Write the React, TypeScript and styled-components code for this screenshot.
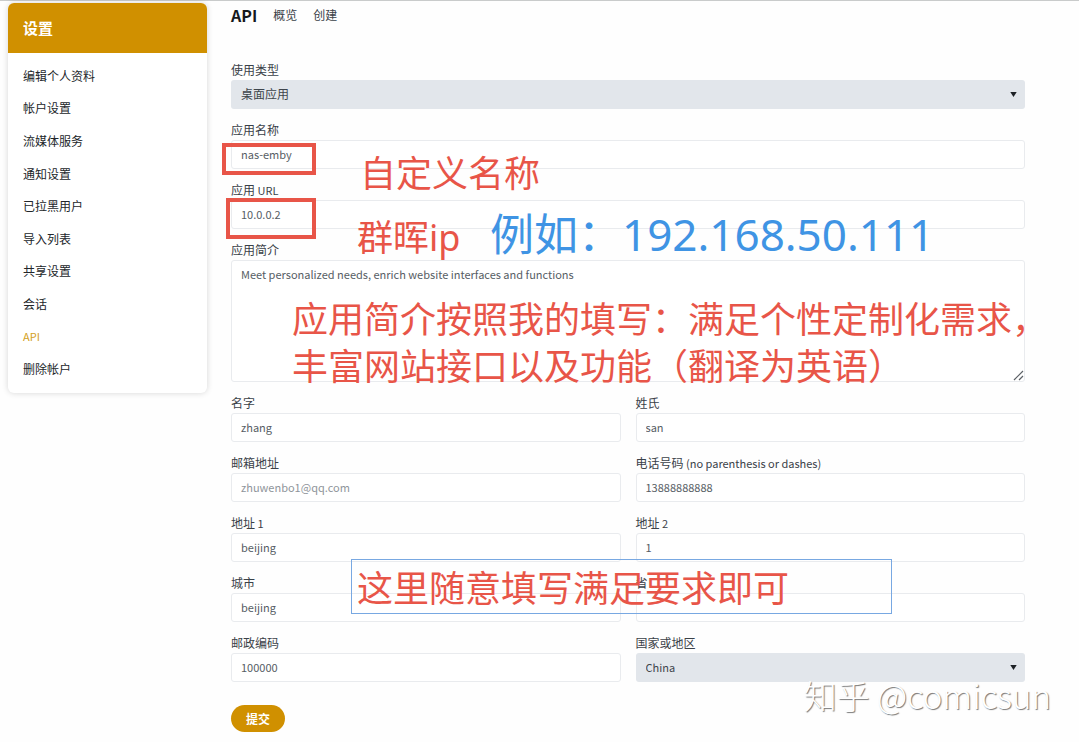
import React from "react";
import styled, { createGlobalStyle } from "styled-components";

const GlobalStyle = createGlobalStyle`
  *, *::before, *::after { box-sizing: border-box; }
  body {
    margin: 0;
    background: #fefefe;
    color: #3a4148;
    font-family: "Noto Sans CJK SC", sans-serif;
    font-size: 12px;
  }
`;

const Page = styled.div`
  position: relative;
  display: flex;
  align-items: flex-start;
  gap: 24px;
  padding: 2px 54px 9px 8px;
  border-top: 1px solid #c9cbcb;
`;

const Sidebar = styled.aside`
  flex: 0 0 199px;
  border-radius: 6px;
  background: #fff;
  box-shadow: 0 0 6px rgba(0, 0, 0, 0.16);
  overflow: hidden;
`;

const SidebarTitle = styled.h2`
  margin: 0;
  padding: 0 15px;
  background: #d09000;
  color: #fff;
  font-size: 15px;
  font-weight: 700;
  line-height: 50px;
`;

const Menu = styled.nav`
  display: grid;
  grid-auto-rows: 1fr;
  min-height: 340px;
  padding: 6px 15px 8px;
`;

const MenuLink = styled.a<{ $active?: boolean }>`
  display: flex;
  align-items: center;
  color: ${(p) => (p.$active ? "#d3a021" : "#22262a")};
  font-size: ${(p) => (p.$active ? 11 : 12)}px;
  text-decoration: none;
`;

const Main = styled.main`
  flex: 1;
  min-width: 0;
`;

const Header = styled.header`
  display: flex;
  align-items: center;
  gap: 16px;
  height: 24px;
  margin-bottom: 33px;
`;

const Title = styled.h1`
  margin: 0;
  color: #16191c;
  font-size: 16px;
  font-weight: 700;
  line-height: 24px;
`;

const HeaderLink = styled.a`
  color: #3a4148;
  text-decoration: none;
  line-height: 24px;
`;

const Form = styled.form`
  display: grid;
  grid-template-columns: 1fr 1fr;
  gap: 11px 15px;
`;

const FieldBox = styled.div<{ $wide?: boolean }>`
  display: flex;
  flex-direction: column;
  grid-column: ${(p) => (p.$wide ? "1 / -1" : "auto")};
`;

const Label = styled.label`
  line-height: 20px;
  white-space: pre;
`;

const LabelNote = styled.span`
  font-size: 11px;
`;

const Input = styled.input`
  width: 100%;
  height: 29px;
  padding: 0 9px 2px;
  border: 1px solid #e9ebee;
  border-radius: 3px;
  background: #fff;
  color: #565d64;
  font: 11px "Noto Sans CJK SC", sans-serif;

  &:disabled { color: #8f959b; }
`;

const TextAreaWrap = styled.div`
  position: relative;
  display: flex;

  svg {
    position: absolute;
    right: 1px;
    bottom: 1px;
    pointer-events: none;
  }
`;

const TextArea = styled.textarea`
  width: 100%;
  height: 122px;
  padding: 3px 9px;
  border: 1px solid #e9ebee;
  border-radius: 3px;
  background: #fff;
  color: #565d64;
  font: 11px/20px "Noto Sans CJK SC", sans-serif;
  resize: vertical;

  &::-webkit-resizer { background: transparent; }
`;

const SelectWrap = styled.div`
  position: relative;
  display: flex;

  svg {
    position: absolute;
    right: 8px;
    top: 12px;
    pointer-events: none;
  }
`;

const Select = styled.select<{ $cjk?: boolean }>`
  width: 100%;
  height: 29px;
  padding: 0 10px 2px;
  border: 0;
  border-radius: 3px;
  appearance: none;
  background: #e2e6eb;
  color: #3e454c;
  font: ${(p) => (p.$cjk ? 12 : 11)}px "Noto Sans CJK SC", sans-serif;
`;

const Submit = styled.button`
  justify-self: start;
  height: 27px;
  margin-top: 12px;
  padding: 0 15px;
  border: 0;
  border-radius: 14px;
  background: #d09000;
  color: #fff;
  font: 700 12px "Noto Sans CJK SC", sans-serif;
`;

const Mark = styled.div<{ $x: number; $y: number; $w: number; $h: number; $thin?: boolean }>`
  position: absolute;
  left: ${(p) => p.$x}px;
  top: ${(p) => p.$y}px;
  width: ${(p) => p.$w}px;
  height: ${(p) => p.$h}px;
  border: ${(p) => (p.$thin ? "1px solid #78a8e2" : "4px solid #e85548")};
  pointer-events: none;
`;

const Note = styled.p<{ $x: number; $y: number; $blue?: boolean }>`
  position: absolute;
  left: ${(p) => p.$x}px;
  top: ${(p) => p.$y}px;
  margin: 0;
  color: ${(p) => (p.$blue ? "#3f94e4" : "#e85548")};
  font-family: "Noto Sans", "Noto Sans CJK SC", sans-serif;
  font-size: ${(p) => (p.$blue ? 44 : 36)}px;
  line-height: 47px;
  white-space: pre;
  pointer-events: none;
`;

const Watermark = styled.p`
  position: absolute;
  right: 28px;
  top: 670px;
  margin: 0;
  color: #fff;
  font-size: 33px;
  font-weight: 300;
  line-height: 48px;
  text-shadow: 1px 1px 1px #777;
  white-space: nowrap;
  pointer-events: none;
`;

const menu = [
  "编辑个人资料", "帐户设置", "流媒体服务", "通知设置", "已拉黑用户",
  "导入列表", "共享设置", "会话", "API", "删除帐户",
];

type FieldProps = {
  id: string;
  label: string;
  note?: string;
  value: string;
  wide?: boolean;
  kind?: "input" | "select" | "textarea";
  disabled?: boolean;
};

const fields: FieldProps[] = [
  { id: "type", label: "使用类型", value: "桌面应用", wide: true, kind: "select" },
  { id: "name", label: "应用名称", value: "nas-emby", wide: true },
  { id: "url", label: "应用", note: "URL", value: "10.0.0.2", wide: true },
  {
    id: "summary", label: "应用简介", wide: true, kind: "textarea",
    value: "Meet personalized needs, enrich website interfaces and functions",
  },
  { id: "first", label: "名字", value: "zhang" },
  { id: "last", label: "姓氏", value: "san" },
  { id: "email", label: "邮箱地址", value: "zhuwenbo1@qq.com", disabled: true },
  { id: "phone", label: "电话号码", note: "(no parenthesis or dashes)", value: "13888888888" },
  { id: "address1", label: "地址", note: "1", value: "beijing" },
  { id: "address2", label: "地址", note: "2", value: "1" },
  { id: "city", label: "城市", value: "beijing" },
  { id: "state", label: "省", value: "" },
  { id: "zip", label: "邮政编码", value: "100000" },
  { id: "country", label: "国家或地区", value: "China", kind: "select" },
];

function Field({ id, label, note, value, wide, kind = "input", disabled }: FieldProps) {
  return (
    <FieldBox $wide={wide}>
      <Label htmlFor={id}>
        {label}
        {note && <LabelNote> {note}</LabelNote>}
      </Label>
      {kind === "input" && <Input id={id} defaultValue={value} disabled={disabled} />}
      {kind === "textarea" && (
        <TextAreaWrap>
          <TextArea id={id} defaultValue={value} spellCheck={false} />
          <svg width="11" height="11" viewBox="0 0 11 11" aria-hidden="true">
            <path d="M1 10L10 1M6 10L10 6" fill="none" stroke="#5c6166" strokeWidth="1.2" />
          </svg>
        </TextAreaWrap>
      )}
      {kind === "select" && (
        <SelectWrap>
          <Select id={id} defaultValue={value} $cjk={wide}>
            <option>{value}</option>
          </Select>
          <svg width="7" height="5" viewBox="0 0 7 5" aria-hidden="true">
            <path d="M0.3 0H6.7L3.5 5Z" fill="#1d2125" />
          </svg>
        </SelectWrap>
      )}
    </FieldBox>
  );
}

export default function App() {
  return (
    <Page>
      <GlobalStyle />
      <Sidebar>
        <SidebarTitle>设置</SidebarTitle>
        <Menu>
          {menu.map((item) => (
            <MenuLink key={item} href="#" $active={item === "API"}>{item}</MenuLink>
          ))}
        </Menu>
      </Sidebar>
      <Main>
        <Header>
          <Title>API</Title>
          <HeaderLink href="#">概览</HeaderLink>
          <HeaderLink href="#">创建</HeaderLink>
        </Header>
        <Form onSubmit={(e) => e.preventDefault()}>
          {fields.map((f) => <Field key={f.id} {...f} />)}
          <Submit type="submit">提交</Submit>
        </Form>
      </Main>

      <Mark $x={222} $y={142} $w={94} $h={32} />
      <Mark $x={226} $y={197} $w={90} $h={41} />
      <Mark $x={351} $y={558} $w={541} $h={55} $thin />
      <Note $x={360} $y={149}>自定义名称</Note>
      <Note $x={357} $y={213}>群晖ip</Note>
      <Note $x={490} $y={210} $blue>例如：192.168.50.111</Note>
      <Note $x={292} $y={295}>{"应用简介按照我的填写：满足个性定制化需求，\n丰富网站接口以及功能（翻译为英语）"}</Note>
      <Note $x={357} $y={564}>这里随意填写满足要求即可</Note>
      <Watermark>知乎 @comicsun</Watermark>
    </Page>
  );
}
